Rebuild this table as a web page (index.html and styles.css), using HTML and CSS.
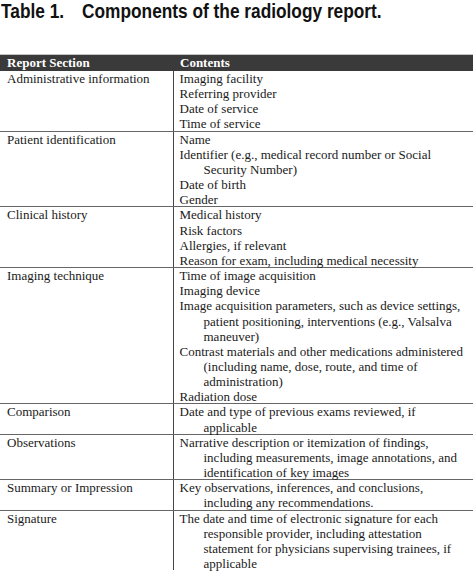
FILE: index.html
```html
<!DOCTYPE html>
<html>
<head>
<meta charset="utf-8">
<link rel="stylesheet" href="styles.css">
</head>
<body>
<div class="title-wrap"><div class="title"><span class="label">Table 1.</span>Components of the radiology report.</div></div>
<table class="report">
  <thead>
    <tr><th class="c1">Report Section</th><th class="c2">Contents</th></tr>
  </thead>
  <tbody>
    <tr><td class="c1">Administrative information</td><td class="c2">
      <div class="item">Imaging facility</div>
      <div class="item">Referring provider</div>
      <div class="item">Date of service</div>
      <div class="item">Time of service</div>
    </td></tr>
    <tr><td class="c1">Patient identification</td><td class="c2">
      <div class="item">Name</div>
      <div class="item">Identifier (e.g., medical record number or Social Security Number)</div>
      <div class="item">Date of birth</div>
      <div class="item">Gender</div>
    </td></tr>
    <tr><td class="c1">Clinical history</td><td class="c2">
      <div class="item">Medical history</div>
      <div class="item">Risk factors</div>
      <div class="item">Allergies, if relevant</div>
      <div class="item">Reason for exam, including medical necessity</div>
    </td></tr>
    <tr><td class="c1">Imaging technique</td><td class="c2">
      <div class="item">Time of image acquisition</div>
      <div class="item">Imaging device</div>
      <div class="item">Image acquisition parameters, such as device settings, patient positioning, interventions (e.g., Valsalva maneuver)</div>
      <div class="item">Contrast materials and other medications administered (including name, dose, route, and time of administration)</div>
      <div class="item">Radiation dose</div>
    </td></tr>
    <tr><td class="c1">Comparison</td><td class="c2">
      <div class="item">Date and type of previous exams reviewed, if applicable</div>
    </td></tr>
    <tr><td class="c1">Observations</td><td class="c2">
      <div class="item">Narrative description or itemization of findings, including measurements, image annotations, and identification of key images</div>
    </td></tr>
    <tr><td class="c1">Summary or Impression</td><td class="c2">
      <div class="item">Key observations, inferences, and conclusions, including any recommendations.</div>
    </td></tr>
    <tr class="last"><td class="c1">Signature</td><td class="c2">
      <div class="item">The date and time of electronic signature for each responsible provider, including attestation statement for physicians supervising trainees, if applicable</div>
    </td></tr>
  </tbody>
</table>
</body>
</html>
```
FILE: styles.css
```css
html, body {
  margin: 0;
  padding: 0;
  background: #ffffff;
}
body {
  width: 474px;
  overflow: hidden;
}
.title-wrap {
  height: 54px;
}
.title {
  font-family: "Liberation Sans", Arial, sans-serif;
  font-weight: bold;
  font-size: 17.3px;
  line-height: 18px;
  color: #111;
  padding-left: 1px;
  white-space: nowrap;
  transform: scaleY(1.2);
  transform-origin: top left;
}
.title .label {
  margin-right: 18px;
}
.report {
  border-collapse: collapse;
  width: 473px;
  table-layout: fixed;
  font-family: "Liberation Serif", "Times New Roman", serif;
  font-size: 13px;
  line-height: 15.15px;
  color: #1a1a1a;
}
.report thead th {
  background: #3a3a3a;
  color: #ffffff;
  font-weight: bold;
  text-align: left;
  height: 16px;
  padding: 0 6px 0 7px;
  border-top: 1px solid #c4c4c4;
  line-height: 16px;
}
.report th.c1 {
  width: 160px;
}
.report td {
  vertical-align: top;
  padding: 0 4px 0 7px;
  border-bottom: 1px solid #666;
}
.report td.c1 {
  width: 160px;
}
.report td.c2 {
  border-left: 1px solid #444;
  padding-left: 6px;
}
.report tr.last td {
  border-bottom-color: transparent;
}
.item {
  padding-left: 24px;
  text-indent: -24px;
}
.item:last-child {
  margin-bottom: -1px;
}
```
